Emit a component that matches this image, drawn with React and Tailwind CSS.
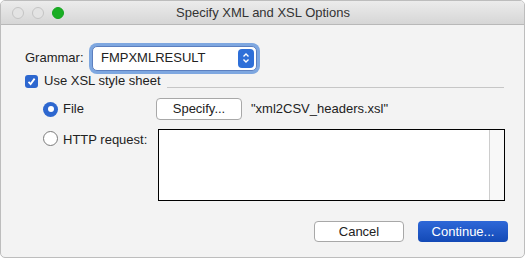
import React from 'react';

function Traffic({ color }) {
  return <span className={`w-[12px] h-[12px] rounded-full border ${color}`} />;
}

export default function App() {
  return (
    <div className="w-[527px] h-[260px] bg-white" style={{ fontFamily: '"Liberation Sans", Arial, sans-serif' }}>
      <div className="w-[525px] h-[258px] rounded-[5px] border border-[#bdbdbd] bg-[#f3f3f3] overflow-hidden flex flex-col text-[13px] text-[#222]">
        {/* title bar */}
        <div className="h-[24px] shrink-0 flex items-center border-b border-[#b8b8b8] bg-gradient-to-b from-[#ececec] to-[#d6d6d6]">
          <div className="flex items-center gap-[8px] pl-[11px]">
            <Traffic color="border-[#c4c4c4] bg-[#e3e3e3]" />
            <Traffic color="border-[#c4c4c4] bg-[#e3e3e3]" />
            <Traffic color="border-[#14a51f] bg-[#1aae24]" />
          </div>
          <div className="flex-1 text-center pr-[62px] text-[#333]">Specify XML and XSL Options</div>
        </div>

        <div className="flex-1 flex flex-col pl-[24px] pr-[16px]">
          {/* grammar */}
          <div className="flex items-center mt-[20px] h-[26px]">
            <span className="w-[67px]">Grammar:</span>
            <div className="w-[165px] h-[25px] rounded-[5px] ring-[3px] ring-[#7ea7e0] border border-[#5c7fbf] bg-white flex items-center">
              <span className="flex-1 pl-[8px]">FMPXMLRESULT</span>
              <span className="w-[16px] h-[19px] mr-[2px] rounded-[4px] bg-[#2e6fd8] flex items-center justify-center">
                <svg width="8" height="12" viewBox="0 0 8 12" fill="none" stroke="white" strokeWidth="1.4">
                  <path d="M1.5 4.5 L4 2 L6.5 4.5" />
                  <path d="M1.5 7.5 L4 10 L6.5 7.5" />
                </svg>
              </span>
            </div>
          </div>

          {/* checkbox */}
          <div className="flex items-center mt-[1px] h-[18px]">
            <span className="w-[13px] h-[13px] rounded-[3px] bg-[#2d67cf] flex items-center justify-center mr-[6px]">
              <svg width="9" height="9" viewBox="0 0 9 9" fill="none" stroke="white" strokeWidth="1.8">
                <path d="M1.5 4.8 L3.6 7 L7.6 1.6" />
              </svg>
            </span>
            <span>Use XSL style sheet</span>
            <div className="flex-1 h-px bg-[#c6c6c6] ml-[6px] mr-[4px] mt-[12px]" />
          </div>

          {/* file row */}
          <div className="flex items-center mt-[7px] h-[24px] pl-[18px]">
            <span className="w-[15px] h-[15px] rounded-full bg-[#2d67cf] flex items-center justify-center mr-[5px]">
              <span className="w-[6px] h-[6px] rounded-full bg-white" />
            </span>
            <span className="w-[93px]">File</span>
            <button className="w-[86px] h-[22px] rounded-[4px] border border-[#a8a8a8] bg-white text-[13px]">Specify...</button>
            <span className="ml-[9px]">"xml2CSV_headers.xsl"</span>
          </div>

          {/* http row */}
          <div className="flex items-start mt-[8px] pl-[18px]">
            <span className="w-[15px] h-[15px] rounded-full border border-[#7b7b7b] bg-white mr-[5px] mt-[2px]" />
            <span className="w-[95px] mt-[1px]">HTTP request:</span>
            <div className="w-[347px] h-[72px] border-[1.5px] border-black bg-white flex justify-end">
              <div className="w-[15px] h-full border-l border-[#cdcdcd] bg-[#f8f8f8]" />
            </div>
          </div>

          {/* buttons */}
          <div className="flex justify-end gap-[14px] mt-[20px]">
            <button className="w-[90px] h-[21px] rounded-[4px] border border-[#a8a8a8] bg-white text-[13px]">Cancel</button>
            <button className="w-[90px] h-[21px] rounded-[4px] bg-gradient-to-b from-[#2e68d8] to-[#1349b6] text-white text-[13px]">Continue...</button>
          </div>
        </div>
      </div>
    </div>
  );
}
